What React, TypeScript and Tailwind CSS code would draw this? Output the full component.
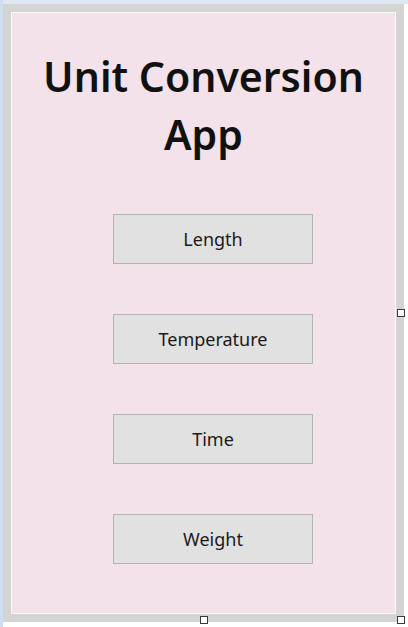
const MENU = ["Length", "Temperature", "Time", "Weight"];

function Handle({ className }: { className: string }) {
  return (
    <div
      className={`absolute h-[8px] w-[8px] border-[1.5px] border-[#3a3a3a] bg-white ${className}`}
    />
  );
}

export default function App() {
  return (
    <div
      className="relative flex h-[627px] w-[408px] overflow-hidden bg-white"
      style={{ fontFamily: '"Noto Sans", "Open Sans", sans-serif' }}
    >
      <div className="h-full w-[3px] shrink-0 bg-[#cfdff0]" />
      <div className="flex flex-col">
        <div className="h-[4px] w-[405px] bg-[#dde8f3]" />
        <div className="h-[618px] w-[401px] bg-[#d4d4d4] p-[8px]">
          <div className="flex h-full w-full flex-col items-center border border-[#fafafa] bg-[#f3e2ea]">
            <h1 className="mt-[34px] text-center text-[41px] font-semibold leading-[58px] text-[#111]">
              Unit Conversion
              <br />
              App
            </h1>
            <div className="ml-[19px] mt-[51px] flex flex-col gap-[50px]">
              {MENU.map((label) => (
                <button
                  key={label}
                  className="h-[50px] w-[200px] border border-[#b4b4b4] bg-[#e1e1e1] text-[18px] text-[#1a1a1a]"
                >
                  {label}
                </button>
              ))}
            </div>
          </div>
        </div>
      </div>
      <Handle className="left-[200px] top-[616px]" />
      <Handle className="left-[397px] top-[616px]" />
      <Handle className="left-[397px] top-[309px]" />
    </div>
  );
}
